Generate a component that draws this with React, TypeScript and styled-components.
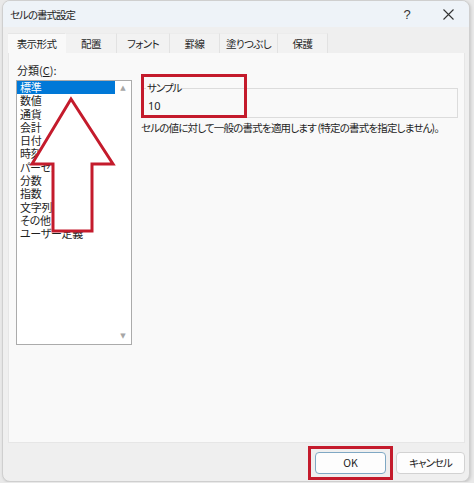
import React from "react";
import styled, { createGlobalStyle } from "styled-components";

const GlobalStyle = createGlobalStyle`
  html, body {
    margin: 0;
    padding: 0;
    background: #e9e9e9;
  }
  body {
    font-family: "Noto Sans CJK JP", "Noto Sans", sans-serif;
    font-feature-settings: "palt";
    font-size: 11px;
    color: #1f1f1f;
  }
`;

const annotation = "#c41b2c";

const Window = styled.div`
  position: relative;
  box-sizing: border-box;
  width: 468px;
  height: 482px;
  margin-left: 2px;
  border: 1px solid #cfcfcf;
  border-radius: 8px;
  overflow: hidden;
  display: flex;
  flex-direction: column;
  background: #efefef;
  box-shadow: 1px 1px 3px rgba(0, 0, 0, 0.15);
`;

const TitleBar = styled.div`
  height: 26px;
  flex: 0 0 26px;
  display: flex;
  align-items: center;
  padding-left: 7px;
  background: #eef3f8;
`;

const Title = styled.div`
  flex: 1;
  font-size: 10.5px;
  letter-spacing: -1px;
  line-height: 14px;
  margin-top: 1px;
`;

const TitleButton = styled.div<{ $w: number }>`
  width: ${(p) => p.$w}px;
  height: 26px;
  display: flex;
  align-items: center;
  justify-content: center;
  font-family: "Liberation Sans", sans-serif;
  font-size: 13px;
  color: #333;
`;

const Body = styled.div`
  flex: 1;
  display: flex;
  flex-direction: column;
  padding: 6px 4px 0 5px;
  min-height: 0;
`;

const TabRow = styled.div`
  display: flex;
  height: 20px;
  flex: 0 0 20px;
`;

const Tab = styled.div<{ $w: number; $active?: boolean }>`
  box-sizing: border-box;
  width: ${(p) => p.$w}px;
  height: 20px;
  display: flex;
  align-items: center;
  justify-content: center;
  white-space: nowrap;
  font-size: 10.5px;
  letter-spacing: -0.6px;
  line-height: 14px;
  background: ${(p) => (p.$active ? "#f9f9f9" : "#f2f2f2")};
  border-right: 1px solid ${(p) => (p.$active ? "#f9f9f9" : "#e2e2e2")};
  border-top: 1px solid ${(p) => (p.$active ? "#e6e6e6" : "#ececec")};
`;

const Panel = styled.div`
  box-sizing: border-box;
  height: 390px;
  flex: 0 0 390px;
  background: #f9f9f9;
  border: 1px solid #e6e6e6;
  border-top: none;
  display: flex;
  gap: 9px;
  padding: 10px 6px 0 7px;
`;

const LeftColumn = styled.div`
  width: 116px;
  flex: 0 0 116px;
  display: flex;
  flex-direction: column;
`;

const FieldLabel = styled.div`
  line-height: 15px;
  height: 15px;
  margin-bottom: 2px;
  padding-left: 1px;
`;

const ListBox = styled.div`
  box-sizing: border-box;
  height: 265px;
  background: #fff;
  border: 1px solid #ababab;
  display: flex;
`;

const ListItems = styled.div`
  flex: 1;
  min-width: 0;
`;

const ListItem = styled.div<{ $selected?: boolean }>`
  height: 13.3px;
  line-height: 13.3px;
  padding-left: 3px;
  white-space: nowrap;
  letter-spacing: -0.3px;
  background: ${(p) => (p.$selected ? "#0078d7" : "transparent")};
  color: ${(p) => (p.$selected ? "#fff" : "#1f1f1f")};
`;

const ScrollBar = styled.div`
  width: 16px;
  flex: 0 0 16px;
  display: flex;
  flex-direction: column;
  justify-content: space-between;
  align-items: center;
  padding: 3px 0 4px;
  color: #a6a6a6;
  font-size: 7px;
  line-height: 8px;
  font-family: "DejaVu Sans", sans-serif;
`;

const RightColumn = styled.div`
  flex: 1;
  min-width: 0;
  padding-top: 18px;
`;

const SampleWrap = styled.div`
  position: relative;
  margin-left: 1px;
`;

const SampleBox = styled.fieldset`
  margin: 0;
  padding: 2px 6px 4px 3px;
  border: 1px solid #dcdcdc;
  min-width: 0;
`;

const SampleLegend = styled.legend`
  padding: 0 1px;
  font-size: 10.5px;
  letter-spacing: -1px;
  line-height: 14px;
`;

const SampleValue = styled.div`
  line-height: 14px;
  padding-left: 2px;
  margin-top: 2px;
  font-family: "Noto Sans", sans-serif;
`;

const Highlight = styled.div`
  position: absolute;
  box-sizing: border-box;
  left: -1px;
  top: -7px;
  width: 106px;
  height: 44px;
  border: 3px solid ${annotation};
  pointer-events: none;
`;

const Description = styled.div`
  margin-top: 3px;
  font-size: 10.5px;
  letter-spacing: -0.8px;
  line-height: 14px;
  white-space: nowrap;
`;

const Footer = styled.div`
  flex: 1;
  display: flex;
  justify-content: flex-end;
  align-items: flex-start;
  gap: 10px;
  padding-top: 9px;
`;

const Button = styled.button<{ $w: number; $default?: boolean }>`
  position: relative;
  box-sizing: border-box;
  width: ${(p) => p.$w}px;
  height: 22px;
  padding: 0;
  border-radius: 4px;
  border: 1px solid ${(p) => (p.$default ? "#7fa8c4" : "#d2d2d2")};
  background: #fdfdfd;
  font-family: "Noto Sans CJK JP", "Noto Sans", sans-serif;
  font-feature-settings: "palt";
  font-size: 10.5px;
  letter-spacing: ${(p) => (p.$default ? "0" : "-1px")};
  line-height: 14px;
  color: #1f1f1f;
`;

const ButtonMark = styled.span`
  position: absolute;
  left: -8px;
  right: -8px;
  top: -7px;
  bottom: -7px;
  border: 3px solid ${annotation};
  pointer-events: none;
`;

const ArrowMark = styled.svg`
  position: absolute;
  left: 26px;
  top: 94px;
  pointer-events: none;
`;

const tabs = [
  { label: "表示形式", w: 58 },
  { label: "配置", w: 51 },
  { label: "フォント", w: 53 },
  { label: "罫線", w: 50 },
  { label: "塗りつぶし", w: 58 },
  { label: "保護", w: 50 },
];

const categories = [
  "標準",
  "数値",
  "通貨",
  "会計",
  "日付",
  "時刻",
  "パーセンテージ",
  "分数",
  "指数",
  "文字列",
  "その他",
  "ユーザー定義",
];

const App = () => {
  return (
    <>
      <GlobalStyle />
      <Window>
        <TitleBar>
          <Title>セルの書式設定</Title>
          <TitleButton $w={40}>?</TitleButton>
          <TitleButton $w={42}>
            <svg width="11" height="11" viewBox="0 0 11 11">
              <path d="M0.5 0.5 L10.5 10.5 M10.5 0.5 L0.5 10.5" stroke="#333" strokeWidth="1.1" />
            </svg>
          </TitleButton>
        </TitleBar>
        <Body>
          <TabRow>
            {tabs.map((t, i) => (
              <Tab key={t.label} $w={t.w} $active={i === 0}>
                {t.label}
              </Tab>
            ))}
          </TabRow>
          <Panel>
            <LeftColumn>
              <FieldLabel>
                分類(<u>C</u>):
              </FieldLabel>
              <ListBox>
                <ListItems>
                  {categories.map((c, i) => (
                    <ListItem key={c} $selected={i === 0}>
                      {c}
                    </ListItem>
                  ))}
                </ListItems>
                <ScrollBar>
                  <span>▲</span>
                  <span>▼</span>
                </ScrollBar>
              </ListBox>
            </LeftColumn>
            <RightColumn>
              <SampleWrap>
                <SampleBox>
                  <SampleLegend>サンプル</SampleLegend>
                  <SampleValue>10</SampleValue>
                </SampleBox>
                <Highlight />
              </SampleWrap>
              <Description>
                セルの値に対して一般の書式を適用します (特定の書式を指定しません)。
              </Description>
            </RightColumn>
          </Panel>
          <Footer>
            <Button $w={71} $default>
              OK
              <ButtonMark />
            </Button>
            <Button $w={69}>キャンセル</Button>
          </Footer>
        </Body>
        {/* up-arrow annotation drawn over the list */}
        <ArrowMark width="88" height="140" viewBox="0 0 88 140">
          <polygon
            points="42,4 84,69 63,69 63,136 24,136 24,69 3,69"
            fill="#fff"
            stroke={annotation}
            strokeWidth="3"
            strokeLinejoin="miter"
          />
        </ArrowMark>
      </Window>
    </>
  );
};

export default App;
